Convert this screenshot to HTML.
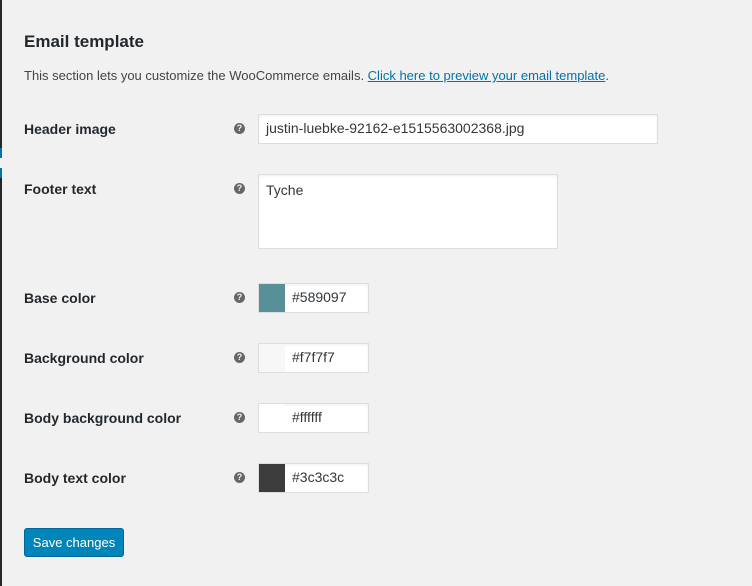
<!DOCTYPE html>
<html><head><style>
body{margin:0;width:752px;height:586px;background:#f1f1f1;font-family:"Liberation Sans",sans-serif;color:#23282d;position:relative;overflow:hidden}
.a{position:absolute}
.side{left:0;top:0;width:2px;height:586px;background:#23282d}
h2{position:absolute;left:24px;top:32px;margin:0;font-size:17px;font-weight:bold}
.desc{left:24px;top:68px;font-size:13px;color:#444}
.desc a{color:#0073aa}
.lbl{left:24px;font-size:14px;font-weight:bold}
.q{left:234px;width:11px;height:11px;border-radius:50%;background:#666;color:#f1f1f1;font-size:9px;font-weight:bold;text-align:center;line-height:11px}
.in{background:#fff;border:1px solid #ddd;box-shadow:inset 0 1px 2px rgba(0,0,0,.07);font-size:14px;color:#32373c;box-sizing:border-box}
.sw{position:absolute;left:0;top:0;width:26px;height:28px}
.btn{left:24px;top:528px;width:100px;height:29px;background:#0085ba;border:1px solid #006799;border-radius:3px;box-sizing:border-box;color:#fff;font-size:13px;text-align:center;line-height:27px}
</style></head><body>
<div class="a side"></div>
<div class="a" style="left:0;top:148px;width:2px;height:30px;background:#0073aa"></div>
<div class="a" style="left:0;top:158px;width:2px;height:10px;background:#f1f1f1"></div>
<h2>Email template</h2>
<div class="a desc">This section lets you customize the WooCommerce emails. <a href="#">Click here to preview your email template</a>.</div>

<div class="a lbl" style="top:121px">Header image</div>
<div class="a q" style="top:123px">?</div>
<div class="a in" style="left:258px;top:114px;width:400px;height:30px;padding:5px 7px">justin-luebke-92162-e1515563002368.jpg</div>

<div class="a lbl" style="top:181px">Footer text</div>
<div class="a q" style="top:183px">?</div>
<div class="a in" style="left:258px;top:174px;width:300px;height:75px;padding:7px 7px">Tyche</div>

<div class="a lbl" style="top:290px">Base color</div>
<div class="a q" style="top:292px">?</div>
<div class="a in" style="left:258px;top:283px;width:111px;height:30px;padding:5px 0 0 33px"><div class="sw" style="background:#589097"></div>#589097</div>

<div class="a lbl" style="top:350px">Background color</div>
<div class="a q" style="top:352px">?</div>
<div class="a in" style="left:258px;top:343px;width:111px;height:30px;padding:5px 0 0 33px"><div class="sw" style="background:#f7f7f7"></div>#f7f7f7</div>

<div class="a lbl" style="top:410px">Body background color</div>
<div class="a q" style="top:412px">?</div>
<div class="a in" style="left:258px;top:403px;width:111px;height:30px;padding:5px 0 0 33px"><div class="sw" style="background:#ffffff"></div>#ffffff</div>

<div class="a lbl" style="top:470px">Body text color</div>
<div class="a q" style="top:472px">?</div>
<div class="a in" style="left:258px;top:463px;width:111px;height:30px;padding:5px 0 0 33px"><div class="sw" style="background:#3c3c3c"></div>#3c3c3c</div>

<div class="a btn">Save changes</div>
</body></html>
